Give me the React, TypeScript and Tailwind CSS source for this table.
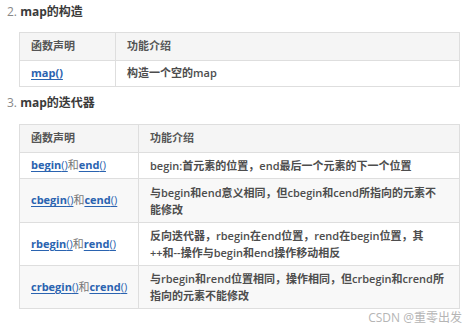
const font = "font-['Open_Sans','Noto_Sans_CJK_SC',sans-serif]";

type Fn = { name: string };

function FnLink({ name }: Fn) {
  return (
    <a className="text-[#2a63b0] underline underline-offset-2 decoration-[#2a63b0]">
      <span className="font-bold">{name}</span>
      <span className="font-normal">()</span>
    </a>
  );
}

function Pair({ a, b }: { a: string; b: string }) {
  return (
    <span>
      <FnLink name={a} />
      <span className="font-normal text-[#777]">和</span>
      <FnLink name={b} />
    </span>
  );
}

const iterRows = [
  {
    fn: <Pair a="begin" b="end" />,
    desc: ["begin:首元素的位置，end最后一个元素的下一个位置"],
    h: "h-[26px]",
    bg: "bg-white",
  },
  {
    fn: <Pair a="cbegin" b="cend" />,
    desc: ["与begin和end意义相同，但cbegin和cend所指向的元素不", "能修改"],
    h: "h-[44px]",
    bg: "bg-[#f8f8f8]",
  },
  {
    fn: <Pair a="rbegin" b="rend" />,
    desc: ["反向迭代器，rbegin在end位置，rend在begin位置，其", "++和--操作与begin和end操作移动相反"],
    h: "h-[43px]",
    bg: "bg-white",
  },
  {
    fn: <Pair a="crbegin" b="crend" />,
    desc: ["与rbegin和rend位置相同，操作相同，但crbegin和crend所", "指向的元素不能修改"],
    h: "h-[43px]",
    bg: "bg-[#f8f8f8]",
  },
];

function Heading({ num, text }: { num: string; text: string }) {
  return (
    <div className="h-4 leading-4 text-[12px]">
      <span className="text-[#888]">{num} </span>
      <span className="font-bold text-[#3a3a3a]">{text}</span>
    </div>
  );
}

export default function App() {
  return (
    <div className={`relative w-[474px] h-[330px] bg-white overflow-hidden ${font}`}>
      <div className="pl-[7px] pt-[4px]">
        <Heading num="2." text="map的构造" />

        {/* table 1 */}
        <div className="ml-[12px] mt-[12px] w-[441px] border border-[#dedede] text-[11px]">
          <div className="flex h-[27px] bg-[#f5f5f5] text-[#555] font-semibold">
            <div className="w-[96px] shrink-0 border-r border-[#dedede] pl-[11px] flex items-center">函数声明</div>
            <div className="flex-1 pl-[11px] flex items-center">功能介绍</div>
          </div>
          <div className="flex h-[26px] border-t border-[#dedede] bg-white">
            <div className="w-[96px] shrink-0 border-r border-[#dedede] pl-[11px] flex items-center">
              <a className="text-[#2a63b0] underline underline-offset-2 font-bold">map()</a>
            </div>
            <div className="flex-1 pl-[11px] flex items-center font-semibold text-[#4d4d4d]">构造一个空的map</div>
          </div>
        </div>

        <div className="mt-[8px]">
          <Heading num="3." text="map的迭代器" />
        </div>

        {/* table 2 */}
        <div className="ml-[12px] mt-[13px] w-[441px] border border-[#dedede] text-[11px]">
          <div className="flex h-[27px] bg-[#f5f5f5] text-[#555] font-semibold">
            <div className="w-[119px] shrink-0 border-r border-[#dedede] pl-[11px] flex items-center">函数声明</div>
            <div className="flex-1 pl-[11px] flex items-center">功能介绍</div>
          </div>
          {iterRows.map((r, i) => (
            <div key={i} className={`flex ${r.h} border-t border-[#dedede] ${r.bg}`}>
              <div className="w-[119px] shrink-0 border-r border-[#dedede] pl-[11px] flex items-center">{r.fn}</div>
              <div className="flex-1 pl-[11px] flex flex-col justify-center font-semibold text-[#4d4d4d] leading-[17px] whitespace-nowrap">
                {r.desc.map((line) => (
                  <div key={line}>{line}</div>
                ))}
              </div>
            </div>
          ))}
        </div>
      </div>

      <div className="absolute right-[12px] top-[310px] text-[12px] leading-4 text-[#b5b5b5]">CSDN @重零出发</div>
    </div>
  );
}
